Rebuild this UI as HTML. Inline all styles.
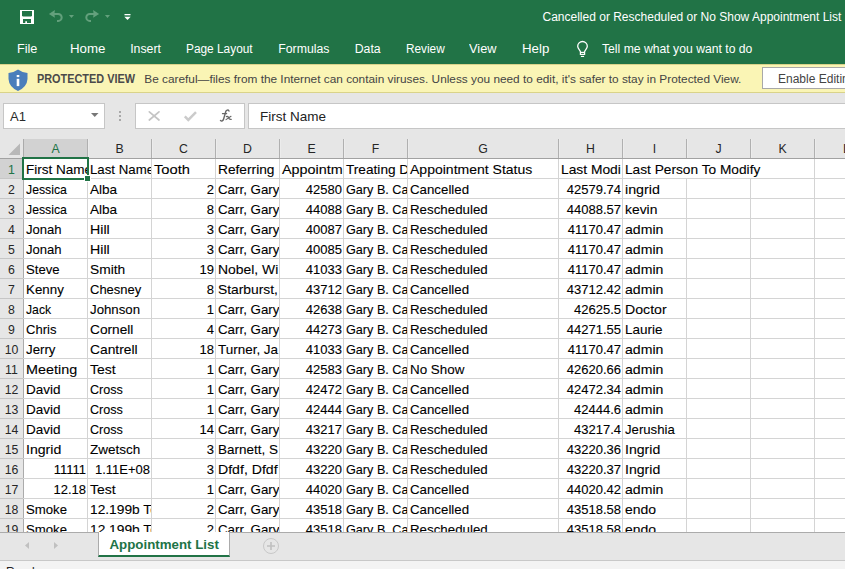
<!DOCTYPE html>
<html><head><meta charset="utf-8"><style>
*{margin:0;padding:0;box-sizing:border-box}
html,body{width:845px;height:569px;overflow:hidden;background:#fff;font-family:"Liberation Sans",sans-serif}
.a{position:absolute}
.t{position:absolute;white-space:nowrap;line-height:1}
#title{left:0;top:0;width:845px;height:64px;background:#217346}
#pv{left:0;top:64px;width:845px;height:29px;background:#faf5b5;border-top:1px solid #d9d38a;border-bottom:1px solid #d9d38a}
#fb{left:0;top:93px;width:845px;height:46px;background:#e6e6e6}
.box{position:absolute;background:#fff;border:1px solid #c6c6c6}
#hdr{left:0;top:139px;width:845px;height:20px;background:#e6e6e6}
.cell{position:absolute;overflow:hidden;white-space:nowrap;height:19px;color:#000;-webkit-text-stroke:0.1px #000}
.cell span{position:absolute;line-height:1}
#tabs{left:0;top:532px;width:845px;height:28px;background:#e6e6e6;border-top:1px solid #ababab}
#status{left:0;top:560px;width:845px;height:9px;background:#f3f3f3;border-top:1px solid #c8c8c8}
</style></head>
<body>
<div id="title" class="a"><svg class="a" style="left:20px;top:10px" width="14" height="14" viewBox="0 0 14 14">
<rect x="0" y="0" width="14" height="14" fill="#fff"/>
<path d="M2 1H12V5.6L11.2 6.4H2.8L2 5.6Z" fill="#217346"/>
<path d="M3 9H11V13H7V11.3H5.3V13H3Z" fill="#217346"/>
</svg><svg class="a" style="left:46px;top:8px" width="90" height="18" viewBox="0 0 90 18">
<g fill="none" stroke="#63a07c" stroke-width="2">
<path d="M6 5.9H12.2A3.5 3.5 0 0 1 12.2 12.9H11"/>
<path d="M50 5.9H43.8A3.5 3.5 0 0 0 43.8 12.9H45"/>
</g>
<path d="M2.9 5.9L8.9 1.9L8.4 5.9L8.9 9.8Z" fill="#63a07c"/>
<path d="M53.1 5.9L47.1 1.9L47.6 5.9L47.1 9.8Z" fill="#63a07c"/>
<path d="M22.9 7L28 7L25.45 10Z" fill="#63a07c"/>
<path d="M58.9 7L64 7L61.45 10Z" fill="#63a07c"/>
<rect x="78.5" y="6" width="6" height="1.3" fill="#fff"/>
<path d="M78.3 8.8L84.7 8.8L81.5 12Z" fill="#fff"/>
</svg><div class="t" style="left:542.5px;top:11px;font-size:12px;color:#fff">Cancelled or Rescheduled or No Show Appointment List</div><div class="t" style="left:17.2px;top:43px;font-size:12.3px;color:#fff;transform:scaleX(1.03);transform-origin:0 0">File</div><div class="t" style="left:70.2px;top:43px;font-size:12.3px;color:#fff;transform:scaleX(1.08);transform-origin:0 0">Home</div><div class="t" style="left:130.2px;top:43px;font-size:12.3px;color:#fff;transform:scaleX(1.0);transform-origin:0 0">Insert</div><div class="t" style="left:186.2px;top:43px;font-size:12.3px;color:#fff;transform:scaleX(0.965);transform-origin:0 0">Page Layout</div><div class="t" style="left:278.2px;top:43px;font-size:12.3px;color:#fff;transform:scaleX(1.0);transform-origin:0 0">Formulas</div><div class="t" style="left:354.7px;top:43px;font-size:12.3px;color:#fff;transform:scaleX(1.0);transform-origin:0 0">Data</div><div class="t" style="left:405.7px;top:43px;font-size:12.3px;color:#fff;transform:scaleX(0.96);transform-origin:0 0">Review</div><div class="t" style="left:469.2px;top:43px;font-size:12.3px;color:#fff;transform:scaleX(1.04);transform-origin:0 0">View</div><div class="t" style="left:521.7px;top:43px;font-size:12.3px;color:#fff;transform:scaleX(1.08);transform-origin:0 0">Help</div><svg class="a" style="left:575px;top:40px" width="16" height="18" viewBox="0 0 16 18">
<path d="M5.5 12C5.2 10 2.7 8.8 2.7 6.3A4.8 4.8 0 0 1 12.3 6.3C12.3 8.8 9.8 10 9.5 12" fill="none" stroke="#fff" stroke-width="1.3"/>
<rect x="5.4" y="12.4" width="4.2" height="2" fill="none" stroke="#fff" stroke-width="1.2"/>
<rect x="5.9" y="15.9" width="3.2" height="1.1" fill="#fff"/>
</svg><div class="t" style="left:602px;top:43px;font-size:12.2px;color:#fff">Tell me what you want to do</div></div><div id="pv" class="a"><svg class="a" style="left:8px;top:3.5px" width="20" height="23" viewBox="0 0 20 23">
<path d="M10 0.5Q5.5 3.8 0.5 4V10Q1 18 10 22Q19 18 19.5 10V4Q14.5 3.8 10 0.5Z" fill="#4a7ebb"/>
<rect x="8.7" y="6" width="2.6" height="2.1" fill="#fff"/><rect x="8.7" y="9.8" width="2.6" height="7.3" fill="#fff"/>
</svg><div class="t" style="left:37px;top:8px;font-size:12.3px;font-weight:bold;color:#4a4a4a;transform:scaleX(0.885);transform-origin:0 0">PROTECTED VIEW</div><div class="t" style="left:144.3px;top:9px;font-size:11.84px;color:#444">Be careful—files from the Internet can contain viruses. Unless you need to edit, it's safer to stay in Protected View.</div><div class="a" style="left:762px;top:2px;width:100px;height:22px;background:#fff;border:1px solid #a8a8a8"></div><div class="t" style="left:778px;top:8px;font-size:12px;color:#444">Enable Editing</div></div><div id="fb" class="a"><div class="box" style="left:3px;top:10px;width:102px;height:26px"></div><div class="t" style="left:10px;top:17.4px;font-size:13px;color:#2a2a2a">A1</div><svg class="a" style="left:91px;top:20px" width="8" height="5"><path d="M0 0H7.5L3.75 4Z" fill="#777"/></svg><svg class="a" style="left:118px;top:18px" width="4" height="11"><rect x="1" y="0" width="2" height="2" fill="#a8a8a8"/><rect x="1" y="4" width="2" height="2" fill="#a8a8a8"/><rect x="1" y="8" width="2" height="2" fill="#a8a8a8"/></svg><div class="box" style="left:135px;top:10px;width:110px;height:26px"></div><svg class="a" style="left:146px;top:17px" width="90" height="14" viewBox="0 0 90 14">
<path d="M3.3 1.8L13 10M13 1.8L3.3 10" stroke="#c4c4c4" stroke-width="1.7" fill="none" stroke-linecap="round"/>
<path d="M38.8 6.4L42.3 9.9L50 2.2" stroke="#cbcbcb" stroke-width="2.5" fill="none"/>
</svg><svg class="a" style="left:214px;top:11px" width="26" height="24" viewBox="0 0 26 24"><g fill="none" stroke="#676767" stroke-linecap="round">
<path d="M15 7C14.3 5.6 12.3 5.8 11.8 7.5L9.6 15C9.1 16.9 7.6 17.4 6.5 16.5" stroke-width="1.4"/>
<path d="M8.4 9.6H12.7" stroke-width="1.1"/>
<path d="M12 15.6L17 12.3" stroke-width="1.1"/>
<path d="M12.4 12.6Q14 12 14.6 13.8Q15.2 15.7 17.2 15.4" stroke-width="1.3"/>
</g></svg><div class="box" style="left:248px;top:10px;width:610px;height:26px"></div><div class="t" style="left:260px;top:17px;font-size:13.5px;color:#222">First Name</div></div><div id="hdr" class="a"></div><svg class="a" style="left:8px;top:143px" width="13" height="13"><path d="M12 0.5V12H0.5Z" fill="#b8b8b8"/></svg><div class="a" style="left:24px;top:139px;width:63px;height:19px;background:#d2d2d2"></div><div class="a" style="left:0;top:159px;width:23px;height:373px;background:#e6e6e6"></div><div class="a" style="left:0;top:159px;width:23px;height:19px;background:#d2d2d2"></div><div class="a" style="left:0;top:158px;width:845px;height:1px;background:#a2a2a2"></div><div class="a" style="left:23px;top:139px;width:1px;height:393px;background:#ababab"></div><div class="a" style="left:87px;top:139px;width:1px;height:19px;background:#b0b0b0"></div><div class="a" style="left:88px;top:139px;width:1px;height:19px;background:#ececec"></div><div class="t" style="left:23px;top:142.5px;width:65px;text-align:center;font-size:12.3px;color:#217346">A</div><div class="a" style="left:151px;top:139px;width:1px;height:19px;background:#b0b0b0"></div><div class="a" style="left:152px;top:139px;width:1px;height:19px;background:#ececec"></div><div class="t" style="left:87px;top:142.5px;width:65px;text-align:center;font-size:12.3px;color:#262626">B</div><div class="a" style="left:215px;top:139px;width:1px;height:19px;background:#b0b0b0"></div><div class="a" style="left:216px;top:139px;width:1px;height:19px;background:#ececec"></div><div class="t" style="left:151px;top:142.5px;width:65px;text-align:center;font-size:12.3px;color:#262626">C</div><div class="a" style="left:279px;top:139px;width:1px;height:19px;background:#b0b0b0"></div><div class="a" style="left:280px;top:139px;width:1px;height:19px;background:#ececec"></div><div class="t" style="left:215px;top:142.5px;width:65px;text-align:center;font-size:12.3px;color:#262626">D</div><div class="a" style="left:343px;top:139px;width:1px;height:19px;background:#b0b0b0"></div><div class="a" style="left:344px;top:139px;width:1px;height:19px;background:#ececec"></div><div class="t" style="left:279px;top:142.5px;width:65px;text-align:center;font-size:12.3px;color:#262626">E</div><div class="a" style="left:407px;top:139px;width:1px;height:19px;background:#b0b0b0"></div><div class="a" style="left:408px;top:139px;width:1px;height:19px;background:#ececec"></div><div class="t" style="left:343px;top:142.5px;width:65px;text-align:center;font-size:12.3px;color:#262626">F</div><div class="a" style="left:558px;top:139px;width:1px;height:19px;background:#b0b0b0"></div><div class="a" style="left:559px;top:139px;width:1px;height:19px;background:#ececec"></div><div class="t" style="left:407px;top:142.5px;width:152px;text-align:center;font-size:12.3px;color:#262626">G</div><div class="a" style="left:622px;top:139px;width:1px;height:19px;background:#b0b0b0"></div><div class="a" style="left:623px;top:139px;width:1px;height:19px;background:#ececec"></div><div class="t" style="left:558px;top:142.5px;width:65px;text-align:center;font-size:12.3px;color:#262626">H</div><div class="a" style="left:686px;top:139px;width:1px;height:19px;background:#b0b0b0"></div><div class="a" style="left:687px;top:139px;width:1px;height:19px;background:#ececec"></div><div class="t" style="left:622px;top:142.5px;width:65px;text-align:center;font-size:12.3px;color:#262626">I</div><div class="a" style="left:750px;top:139px;width:1px;height:19px;background:#b0b0b0"></div><div class="a" style="left:751px;top:139px;width:1px;height:19px;background:#ececec"></div><div class="t" style="left:686px;top:142.5px;width:65px;text-align:center;font-size:12.3px;color:#262626">J</div><div class="a" style="left:814px;top:139px;width:1px;height:19px;background:#b0b0b0"></div><div class="a" style="left:815px;top:139px;width:1px;height:19px;background:#ececec"></div><div class="t" style="left:750px;top:142.5px;width:65px;text-align:center;font-size:12.3px;color:#262626">K</div><div class="a" style="left:878px;top:139px;width:1px;height:19px;background:#b0b0b0"></div><div class="a" style="left:879px;top:139px;width:1px;height:19px;background:#ececec"></div><div class="t" style="left:814px;top:142.5px;width:65px;text-align:center;font-size:12.3px;color:#262626">L</div><div class="a" style="left:87px;top:159px;width:1px;height:373px;background:#d4d4d4"></div><div class="a" style="left:151px;top:159px;width:1px;height:373px;background:#d4d4d4"></div><div class="a" style="left:215px;top:159px;width:1px;height:373px;background:#d4d4d4"></div><div class="a" style="left:279px;top:159px;width:1px;height:373px;background:#d4d4d4"></div><div class="a" style="left:343px;top:159px;width:1px;height:373px;background:#d4d4d4"></div><div class="a" style="left:407px;top:159px;width:1px;height:373px;background:#d4d4d4"></div><div class="a" style="left:558px;top:159px;width:1px;height:373px;background:#d4d4d4"></div><div class="a" style="left:622px;top:159px;width:1px;height:373px;background:#d4d4d4"></div><div class="a" style="left:686px;top:159px;width:1px;height:373px;background:#d4d4d4"></div><div class="a" style="left:750px;top:159px;width:1px;height:373px;background:#d4d4d4"></div><div class="a" style="left:814px;top:159px;width:1px;height:373px;background:#d4d4d4"></div><div class="a" style="left:878px;top:159px;width:1px;height:373px;background:#d4d4d4"></div><div class="a" style="left:23px;top:178px;width:822px;height:1px;background:#d4d4d4"></div><div class="a" style="left:0px;top:178px;width:23px;height:1px;background:#c6c6c6"></div><div class="a" style="left:23px;top:198px;width:822px;height:1px;background:#d4d4d4"></div><div class="a" style="left:0px;top:198px;width:23px;height:1px;background:#c6c6c6"></div><div class="a" style="left:23px;top:218px;width:822px;height:1px;background:#d4d4d4"></div><div class="a" style="left:0px;top:218px;width:23px;height:1px;background:#c6c6c6"></div><div class="a" style="left:23px;top:238px;width:822px;height:1px;background:#d4d4d4"></div><div class="a" style="left:0px;top:238px;width:23px;height:1px;background:#c6c6c6"></div><div class="a" style="left:23px;top:258px;width:822px;height:1px;background:#d4d4d4"></div><div class="a" style="left:0px;top:258px;width:23px;height:1px;background:#c6c6c6"></div><div class="a" style="left:23px;top:278px;width:822px;height:1px;background:#d4d4d4"></div><div class="a" style="left:0px;top:278px;width:23px;height:1px;background:#c6c6c6"></div><div class="a" style="left:23px;top:298px;width:822px;height:1px;background:#d4d4d4"></div><div class="a" style="left:0px;top:298px;width:23px;height:1px;background:#c6c6c6"></div><div class="a" style="left:23px;top:318px;width:822px;height:1px;background:#d4d4d4"></div><div class="a" style="left:0px;top:318px;width:23px;height:1px;background:#c6c6c6"></div><div class="a" style="left:23px;top:338px;width:822px;height:1px;background:#d4d4d4"></div><div class="a" style="left:0px;top:338px;width:23px;height:1px;background:#c6c6c6"></div><div class="a" style="left:23px;top:358px;width:822px;height:1px;background:#d4d4d4"></div><div class="a" style="left:0px;top:358px;width:23px;height:1px;background:#c6c6c6"></div><div class="a" style="left:23px;top:378px;width:822px;height:1px;background:#d4d4d4"></div><div class="a" style="left:0px;top:378px;width:23px;height:1px;background:#c6c6c6"></div><div class="a" style="left:23px;top:398px;width:822px;height:1px;background:#d4d4d4"></div><div class="a" style="left:0px;top:398px;width:23px;height:1px;background:#c6c6c6"></div><div class="a" style="left:23px;top:418px;width:822px;height:1px;background:#d4d4d4"></div><div class="a" style="left:0px;top:418px;width:23px;height:1px;background:#c6c6c6"></div><div class="a" style="left:23px;top:438px;width:822px;height:1px;background:#d4d4d4"></div><div class="a" style="left:0px;top:438px;width:23px;height:1px;background:#c6c6c6"></div><div class="a" style="left:23px;top:458px;width:822px;height:1px;background:#d4d4d4"></div><div class="a" style="left:0px;top:458px;width:23px;height:1px;background:#c6c6c6"></div><div class="a" style="left:23px;top:478px;width:822px;height:1px;background:#d4d4d4"></div><div class="a" style="left:0px;top:478px;width:23px;height:1px;background:#c6c6c6"></div><div class="a" style="left:23px;top:498px;width:822px;height:1px;background:#d4d4d4"></div><div class="a" style="left:0px;top:498px;width:23px;height:1px;background:#c6c6c6"></div><div class="a" style="left:23px;top:518px;width:822px;height:1px;background:#d4d4d4"></div><div class="a" style="left:0px;top:518px;width:23px;height:1px;background:#c6c6c6"></div><div class="t" style="left:0;top:164px;width:23px;text-align:center;font-size:12.3px;color:#217346">1</div><div class="t" style="left:0;top:184px;width:23px;text-align:center;font-size:12.3px;color:#262626">2</div><div class="t" style="left:0;top:204px;width:23px;text-align:center;font-size:12.3px;color:#262626">3</div><div class="t" style="left:0;top:224px;width:23px;text-align:center;font-size:12.3px;color:#262626">4</div><div class="t" style="left:0;top:244px;width:23px;text-align:center;font-size:12.3px;color:#262626">5</div><div class="t" style="left:0;top:264px;width:23px;text-align:center;font-size:12.3px;color:#262626">6</div><div class="t" style="left:0;top:284px;width:23px;text-align:center;font-size:12.3px;color:#262626">7</div><div class="t" style="left:0;top:304px;width:23px;text-align:center;font-size:12.3px;color:#262626">8</div><div class="t" style="left:0;top:324px;width:23px;text-align:center;font-size:12.3px;color:#262626">9</div><div class="t" style="left:0;top:344px;width:23px;text-align:center;font-size:12.3px;color:#262626">10</div><div class="t" style="left:0;top:364px;width:23px;text-align:center;font-size:12.3px;color:#262626">11</div><div class="t" style="left:0;top:384px;width:23px;text-align:center;font-size:12.3px;color:#262626">12</div><div class="t" style="left:0;top:404px;width:23px;text-align:center;font-size:12.3px;color:#262626">13</div><div class="t" style="left:0;top:424px;width:23px;text-align:center;font-size:12.3px;color:#262626">14</div><div class="t" style="left:0;top:444px;width:23px;text-align:center;font-size:12.3px;color:#262626">15</div><div class="t" style="left:0;top:464px;width:23px;text-align:center;font-size:12.3px;color:#262626">16</div><div class="t" style="left:0;top:484px;width:23px;text-align:center;font-size:12.3px;color:#262626">17</div><div class="t" style="left:0;top:504px;width:23px;text-align:center;font-size:12.3px;color:#262626">18</div><div class="t" style="left:0;top:524px;width:23px;text-align:center;font-size:12.3px;color:#262626">19</div><div class="cell" style="left:24px;top:159px;width:63px;"><span style="left:2px;top:4px;font-size:13.5px;transform:scaleX(1.0022);transform-origin:0 0">First Name</span></div><div class="cell" style="left:88px;top:159px;width:63px;"><span style="left:2px;top:4px;font-size:13.5px;transform:scaleX(0.9817);transform-origin:0 0">Last Name</span></div><div class="cell" style="left:152px;top:159px;width:63px;"><span style="left:2px;top:4px;font-size:13.5px;transform:scaleX(1.0909);transform-origin:0 0">Tooth</span></div><div class="cell" style="left:216px;top:159px;width:63px;"><span style="left:2px;top:4px;font-size:13.5px;transform:scaleX(1.0173);transform-origin:0 0">Referring</span></div><div class="cell" style="left:280px;top:159px;width:63px;"><span style="left:2px;top:4px;font-size:13.5px;transform:scaleX(1.0637);transform-origin:0 0">Appointm</span></div><div class="cell" style="left:344px;top:159px;width:63px;"><span style="left:2px;top:4px;font-size:13.5px;transform:scaleX(1.0109);transform-origin:0 0">Treating D</span></div><div class="cell" style="left:408px;top:159px;width:150px;"><span style="left:2px;top:4px;font-size:13.5px;transform:scaleX(1.0381);transform-origin:0 0">Appointment Status</span></div><div class="cell" style="left:559px;top:159px;width:63px;"><span style="left:2px;top:4px;font-size:13.5px;transform:scaleX(1.0222);transform-origin:0 0">Last Modi</span></div><div class="cell" style="left:623px;top:159px;width:191px;background:#fff;"><span style="left:2px;top:4px;font-size:13.5px;transform:scaleX(1.0148);transform-origin:0 0">Last Person To Modify</span></div><div class="cell" style="left:24px;top:179px;width:63px;"><span style="left:2px;top:4px;font-size:13.5px;transform:scaleX(0.9097);transform-origin:0 0">Jessica</span></div><div class="cell" style="left:88px;top:179px;width:63px;"><span style="left:2px;top:4px;font-size:13.5px;transform:scaleX(1.0058);transform-origin:0 0">Alba</span></div><div class="cell" style="left:152px;top:179px;width:63px"><span style="right:1px;top:4px;font-size:13px">2</span></div><div class="cell" style="left:216px;top:179px;width:63px;"><span style="left:2px;top:4px;font-size:13.5px;transform:scaleX(0.9868);transform-origin:0 0">Carr, Gary</span></div><div class="cell" style="left:280px;top:179px;width:63px"><span style="right:1px;top:4px;font-size:13px">42580</span></div><div class="cell" style="left:344px;top:179px;width:63px;"><span style="left:2px;top:4px;font-size:13.5px;transform:scaleX(0.9364);transform-origin:0 0">Gary B. Ca</span></div><div class="cell" style="left:408px;top:179px;width:150px;"><span style="left:2px;top:4px;font-size:13.5px;transform:scaleX(0.9842);transform-origin:0 0">Cancelled</span></div><div class="cell" style="left:559px;top:179px;width:63px"><span style="right:1px;top:4px;font-size:13px">42579.74</span></div><div class="cell" style="left:623px;top:179px;width:64px;"><span style="left:2px;top:4px;font-size:13.5px;transform:scaleX(1.0577);transform-origin:0 0">ingrid</span></div><div class="cell" style="left:24px;top:199px;width:63px;"><span style="left:2px;top:4px;font-size:13.5px;transform:scaleX(0.9097);transform-origin:0 0">Jessica</span></div><div class="cell" style="left:88px;top:199px;width:63px;"><span style="left:2px;top:4px;font-size:13.5px;transform:scaleX(1.0058);transform-origin:0 0">Alba</span></div><div class="cell" style="left:152px;top:199px;width:63px"><span style="right:1px;top:4px;font-size:13px">8</span></div><div class="cell" style="left:216px;top:199px;width:63px;"><span style="left:2px;top:4px;font-size:13.5px;transform:scaleX(0.9868);transform-origin:0 0">Carr, Gary</span></div><div class="cell" style="left:280px;top:199px;width:63px"><span style="right:1px;top:4px;font-size:13px">44088</span></div><div class="cell" style="left:344px;top:199px;width:63px;"><span style="left:2px;top:4px;font-size:13.5px;transform:scaleX(0.9364);transform-origin:0 0">Gary B. Ca</span></div><div class="cell" style="left:408px;top:199px;width:150px;"><span style="left:2px;top:4px;font-size:13.5px;transform:scaleX(0.9860);transform-origin:0 0">Rescheduled</span></div><div class="cell" style="left:559px;top:199px;width:63px"><span style="right:1px;top:4px;font-size:13px">44088.57</span></div><div class="cell" style="left:623px;top:199px;width:64px;"><span style="left:2px;top:4px;font-size:13.5px;transform:scaleX(1.0274);transform-origin:0 0">kevin</span></div><div class="cell" style="left:24px;top:219px;width:63px;"><span style="left:2px;top:4px;font-size:13.5px;transform:scaleX(0.9686);transform-origin:0 0">Jonah</span></div><div class="cell" style="left:88px;top:219px;width:63px;"><span style="left:2px;top:4px;font-size:13.5px;transform:scaleX(1.0492);transform-origin:0 0">Hill</span></div><div class="cell" style="left:152px;top:219px;width:63px"><span style="right:1px;top:4px;font-size:13px">3</span></div><div class="cell" style="left:216px;top:219px;width:63px;"><span style="left:2px;top:4px;font-size:13.5px;transform:scaleX(0.9868);transform-origin:0 0">Carr, Gary</span></div><div class="cell" style="left:280px;top:219px;width:63px"><span style="right:1px;top:4px;font-size:13px">40087</span></div><div class="cell" style="left:344px;top:219px;width:63px;"><span style="left:2px;top:4px;font-size:13.5px;transform:scaleX(0.9364);transform-origin:0 0">Gary B. Ca</span></div><div class="cell" style="left:408px;top:219px;width:150px;"><span style="left:2px;top:4px;font-size:13.5px;transform:scaleX(0.9860);transform-origin:0 0">Rescheduled</span></div><div class="cell" style="left:559px;top:219px;width:63px"><span style="right:1px;top:4px;font-size:13px">41170.47</span></div><div class="cell" style="left:623px;top:219px;width:64px;"><span style="left:2px;top:4px;font-size:13.5px;transform:scaleX(1.0432);transform-origin:0 0">admin</span></div><div class="cell" style="left:24px;top:239px;width:63px;"><span style="left:2px;top:4px;font-size:13.5px;transform:scaleX(0.9686);transform-origin:0 0">Jonah</span></div><div class="cell" style="left:88px;top:239px;width:63px;"><span style="left:2px;top:4px;font-size:13.5px;transform:scaleX(1.0492);transform-origin:0 0">Hill</span></div><div class="cell" style="left:152px;top:239px;width:63px"><span style="right:1px;top:4px;font-size:13px">3</span></div><div class="cell" style="left:216px;top:239px;width:63px;"><span style="left:2px;top:4px;font-size:13.5px;transform:scaleX(0.9868);transform-origin:0 0">Carr, Gary</span></div><div class="cell" style="left:280px;top:239px;width:63px"><span style="right:1px;top:4px;font-size:13px">40085</span></div><div class="cell" style="left:344px;top:239px;width:63px;"><span style="left:2px;top:4px;font-size:13.5px;transform:scaleX(0.9364);transform-origin:0 0">Gary B. Ca</span></div><div class="cell" style="left:408px;top:239px;width:150px;"><span style="left:2px;top:4px;font-size:13.5px;transform:scaleX(0.9860);transform-origin:0 0">Rescheduled</span></div><div class="cell" style="left:559px;top:239px;width:63px"><span style="right:1px;top:4px;font-size:13px">41170.47</span></div><div class="cell" style="left:623px;top:239px;width:64px;"><span style="left:2px;top:4px;font-size:13.5px;transform:scaleX(1.0432);transform-origin:0 0">admin</span></div><div class="cell" style="left:24px;top:259px;width:63px;"><span style="left:2px;top:4px;font-size:13.5px;transform:scaleX(0.9736);transform-origin:0 0">Steve</span></div><div class="cell" style="left:88px;top:259px;width:63px;"><span style="left:2px;top:4px;font-size:13.5px;transform:scaleX(1.0205);transform-origin:0 0">Smith</span></div><div class="cell" style="left:152px;top:259px;width:63px"><span style="right:1px;top:4px;font-size:13px">19</span></div><div class="cell" style="left:216px;top:259px;width:63px;"><span style="left:2px;top:4px;font-size:13.5px;transform:scaleX(1.0305);transform-origin:0 0">Nobel, Wi</span></div><div class="cell" style="left:280px;top:259px;width:63px"><span style="right:1px;top:4px;font-size:13px">41033</span></div><div class="cell" style="left:344px;top:259px;width:63px;"><span style="left:2px;top:4px;font-size:13.5px;transform:scaleX(0.9364);transform-origin:0 0">Gary B. Ca</span></div><div class="cell" style="left:408px;top:259px;width:150px;"><span style="left:2px;top:4px;font-size:13.5px;transform:scaleX(0.9860);transform-origin:0 0">Rescheduled</span></div><div class="cell" style="left:559px;top:259px;width:63px"><span style="right:1px;top:4px;font-size:13px">41170.47</span></div><div class="cell" style="left:623px;top:259px;width:64px;"><span style="left:2px;top:4px;font-size:13.5px;transform:scaleX(1.0432);transform-origin:0 0">admin</span></div><div class="cell" style="left:24px;top:279px;width:63px;"><span style="left:2px;top:4px;font-size:13.5px;transform:scaleX(0.9876);transform-origin:0 0">Kenny</span></div><div class="cell" style="left:88px;top:279px;width:63px;"><span style="left:2px;top:4px;font-size:13.5px;transform:scaleX(0.9633);transform-origin:0 0">Chesney</span></div><div class="cell" style="left:152px;top:279px;width:63px"><span style="right:1px;top:4px;font-size:13px">8</span></div><div class="cell" style="left:216px;top:279px;width:63px;"><span style="left:2px;top:4px;font-size:13.5px;transform:scaleX(1.0243);transform-origin:0 0">Starburst,</span></div><div class="cell" style="left:280px;top:279px;width:63px"><span style="right:1px;top:4px;font-size:13px">43712</span></div><div class="cell" style="left:344px;top:279px;width:63px;"><span style="left:2px;top:4px;font-size:13.5px;transform:scaleX(0.9364);transform-origin:0 0">Gary B. Ca</span></div><div class="cell" style="left:408px;top:279px;width:150px;"><span style="left:2px;top:4px;font-size:13.5px;transform:scaleX(0.9842);transform-origin:0 0">Cancelled</span></div><div class="cell" style="left:559px;top:279px;width:63px"><span style="right:1px;top:4px;font-size:13px">43712.42</span></div><div class="cell" style="left:623px;top:279px;width:64px;"><span style="left:2px;top:4px;font-size:13.5px;transform:scaleX(1.0432);transform-origin:0 0">admin</span></div><div class="cell" style="left:24px;top:299px;width:63px;"><span style="left:2px;top:4px;font-size:13.5px;transform:scaleX(0.9051);transform-origin:0 0">Jack</span></div><div class="cell" style="left:88px;top:299px;width:63px;"><span style="left:2px;top:4px;font-size:13.5px;transform:scaleX(0.9817);transform-origin:0 0">Johnson</span></div><div class="cell" style="left:152px;top:299px;width:63px"><span style="right:1px;top:4px;font-size:13px">1</span></div><div class="cell" style="left:216px;top:299px;width:63px;"><span style="left:2px;top:4px;font-size:13.5px;transform:scaleX(0.9868);transform-origin:0 0">Carr, Gary</span></div><div class="cell" style="left:280px;top:299px;width:63px"><span style="right:1px;top:4px;font-size:13px">42638</span></div><div class="cell" style="left:344px;top:299px;width:63px;"><span style="left:2px;top:4px;font-size:13.5px;transform:scaleX(0.9364);transform-origin:0 0">Gary B. Ca</span></div><div class="cell" style="left:408px;top:299px;width:150px;"><span style="left:2px;top:4px;font-size:13.5px;transform:scaleX(0.9860);transform-origin:0 0">Rescheduled</span></div><div class="cell" style="left:559px;top:299px;width:63px"><span style="right:1px;top:4px;font-size:13px">42625.5</span></div><div class="cell" style="left:623px;top:299px;width:64px;"><span style="left:2px;top:4px;font-size:13.5px;transform:scaleX(1.0473);transform-origin:0 0">Doctor</span></div><div class="cell" style="left:24px;top:319px;width:63px;"><span style="left:2px;top:4px;font-size:13.5px;transform:scaleX(0.9652);transform-origin:0 0">Chris</span></div><div class="cell" style="left:88px;top:319px;width:63px;"><span style="left:2px;top:4px;font-size:13.5px;transform:scaleX(1.0137);transform-origin:0 0">Cornell</span></div><div class="cell" style="left:152px;top:319px;width:63px"><span style="right:1px;top:4px;font-size:13px">4</span></div><div class="cell" style="left:216px;top:319px;width:63px;"><span style="left:2px;top:4px;font-size:13.5px;transform:scaleX(0.9868);transform-origin:0 0">Carr, Gary</span></div><div class="cell" style="left:280px;top:319px;width:63px"><span style="right:1px;top:4px;font-size:13px">44273</span></div><div class="cell" style="left:344px;top:319px;width:63px;"><span style="left:2px;top:4px;font-size:13.5px;transform:scaleX(0.9364);transform-origin:0 0">Gary B. Ca</span></div><div class="cell" style="left:408px;top:319px;width:150px;"><span style="left:2px;top:4px;font-size:13.5px;transform:scaleX(0.9860);transform-origin:0 0">Rescheduled</span></div><div class="cell" style="left:559px;top:319px;width:63px"><span style="right:1px;top:4px;font-size:13px">44271.55</span></div><div class="cell" style="left:623px;top:319px;width:64px;"><span style="left:2px;top:4px;font-size:13.5px;transform:scaleX(0.9994);transform-origin:0 0">Laurie</span></div><div class="cell" style="left:24px;top:339px;width:63px;"><span style="left:2px;top:4px;font-size:13.5px;transform:scaleX(0.9832);transform-origin:0 0">Jerry</span></div><div class="cell" style="left:88px;top:339px;width:63px;"><span style="left:2px;top:4px;font-size:13.5px;transform:scaleX(1.0244);transform-origin:0 0">Cantrell</span></div><div class="cell" style="left:152px;top:339px;width:63px"><span style="right:1px;top:4px;font-size:13px">18</span></div><div class="cell" style="left:216px;top:339px;width:63px;"><span style="left:2px;top:4px;font-size:13.5px;transform:scaleX(0.9969);transform-origin:0 0">Turner, Ja</span></div><div class="cell" style="left:280px;top:339px;width:63px"><span style="right:1px;top:4px;font-size:13px">41033</span></div><div class="cell" style="left:344px;top:339px;width:63px;"><span style="left:2px;top:4px;font-size:13.5px;transform:scaleX(0.9364);transform-origin:0 0">Gary B. Ca</span></div><div class="cell" style="left:408px;top:339px;width:150px;"><span style="left:2px;top:4px;font-size:13.5px;transform:scaleX(0.9842);transform-origin:0 0">Cancelled</span></div><div class="cell" style="left:559px;top:339px;width:63px"><span style="right:1px;top:4px;font-size:13px">41170.47</span></div><div class="cell" style="left:623px;top:339px;width:64px;"><span style="left:2px;top:4px;font-size:13.5px;transform:scaleX(1.0432);transform-origin:0 0">admin</span></div><div class="cell" style="left:24px;top:359px;width:63px;"><span style="left:2px;top:4px;font-size:13.5px;transform:scaleX(1.0651);transform-origin:0 0">Meeting</span></div><div class="cell" style="left:88px;top:359px;width:63px;"><span style="left:2px;top:4px;font-size:13.5px;transform:scaleX(1.0363);transform-origin:0 0">Test</span></div><div class="cell" style="left:152px;top:359px;width:63px"><span style="right:1px;top:4px;font-size:13px">1</span></div><div class="cell" style="left:216px;top:359px;width:63px;"><span style="left:2px;top:4px;font-size:13.5px;transform:scaleX(0.9868);transform-origin:0 0">Carr, Gary</span></div><div class="cell" style="left:280px;top:359px;width:63px"><span style="right:1px;top:4px;font-size:13px">42583</span></div><div class="cell" style="left:344px;top:359px;width:63px;"><span style="left:2px;top:4px;font-size:13.5px;transform:scaleX(0.9364);transform-origin:0 0">Gary B. Ca</span></div><div class="cell" style="left:408px;top:359px;width:150px;"><span style="left:2px;top:4px;font-size:13.5px;transform:scaleX(0.9929);transform-origin:0 0">No Show</span></div><div class="cell" style="left:559px;top:359px;width:63px"><span style="right:1px;top:4px;font-size:13px">42620.66</span></div><div class="cell" style="left:623px;top:359px;width:64px;"><span style="left:2px;top:4px;font-size:13.5px;transform:scaleX(1.0432);transform-origin:0 0">admin</span></div><div class="cell" style="left:24px;top:379px;width:63px;"><span style="left:2px;top:4px;font-size:13.5px;transform:scaleX(0.9999);transform-origin:0 0">David</span></div><div class="cell" style="left:88px;top:379px;width:63px;"><span style="left:2px;top:4px;font-size:13.5px;transform:scaleX(0.9321);transform-origin:0 0">Cross</span></div><div class="cell" style="left:152px;top:379px;width:63px"><span style="right:1px;top:4px;font-size:13px">1</span></div><div class="cell" style="left:216px;top:379px;width:63px;"><span style="left:2px;top:4px;font-size:13.5px;transform:scaleX(0.9868);transform-origin:0 0">Carr, Gary</span></div><div class="cell" style="left:280px;top:379px;width:63px"><span style="right:1px;top:4px;font-size:13px">42472</span></div><div class="cell" style="left:344px;top:379px;width:63px;"><span style="left:2px;top:4px;font-size:13.5px;transform:scaleX(0.9364);transform-origin:0 0">Gary B. Ca</span></div><div class="cell" style="left:408px;top:379px;width:150px;"><span style="left:2px;top:4px;font-size:13.5px;transform:scaleX(0.9842);transform-origin:0 0">Cancelled</span></div><div class="cell" style="left:559px;top:379px;width:63px"><span style="right:1px;top:4px;font-size:13px">42472.34</span></div><div class="cell" style="left:623px;top:379px;width:64px;"><span style="left:2px;top:4px;font-size:13.5px;transform:scaleX(1.0432);transform-origin:0 0">admin</span></div><div class="cell" style="left:24px;top:399px;width:63px;"><span style="left:2px;top:4px;font-size:13.5px;transform:scaleX(0.9999);transform-origin:0 0">David</span></div><div class="cell" style="left:88px;top:399px;width:63px;"><span style="left:2px;top:4px;font-size:13.5px;transform:scaleX(0.9321);transform-origin:0 0">Cross</span></div><div class="cell" style="left:152px;top:399px;width:63px"><span style="right:1px;top:4px;font-size:13px">1</span></div><div class="cell" style="left:216px;top:399px;width:63px;"><span style="left:2px;top:4px;font-size:13.5px;transform:scaleX(0.9868);transform-origin:0 0">Carr, Gary</span></div><div class="cell" style="left:280px;top:399px;width:63px"><span style="right:1px;top:4px;font-size:13px">42444</span></div><div class="cell" style="left:344px;top:399px;width:63px;"><span style="left:2px;top:4px;font-size:13.5px;transform:scaleX(0.9364);transform-origin:0 0">Gary B. Ca</span></div><div class="cell" style="left:408px;top:399px;width:150px;"><span style="left:2px;top:4px;font-size:13.5px;transform:scaleX(0.9842);transform-origin:0 0">Cancelled</span></div><div class="cell" style="left:559px;top:399px;width:63px"><span style="right:1px;top:4px;font-size:13px">42444.6</span></div><div class="cell" style="left:623px;top:399px;width:64px;"><span style="left:2px;top:4px;font-size:13.5px;transform:scaleX(1.0432);transform-origin:0 0">admin</span></div><div class="cell" style="left:24px;top:419px;width:63px;"><span style="left:2px;top:4px;font-size:13.5px;transform:scaleX(0.9999);transform-origin:0 0">David</span></div><div class="cell" style="left:88px;top:419px;width:63px;"><span style="left:2px;top:4px;font-size:13.5px;transform:scaleX(0.9321);transform-origin:0 0">Cross</span></div><div class="cell" style="left:152px;top:419px;width:63px"><span style="right:1px;top:4px;font-size:13px">14</span></div><div class="cell" style="left:216px;top:419px;width:63px;"><span style="left:2px;top:4px;font-size:13.5px;transform:scaleX(0.9868);transform-origin:0 0">Carr, Gary</span></div><div class="cell" style="left:280px;top:419px;width:63px"><span style="right:1px;top:4px;font-size:13px">43217</span></div><div class="cell" style="left:344px;top:419px;width:63px;"><span style="left:2px;top:4px;font-size:13.5px;transform:scaleX(0.9364);transform-origin:0 0">Gary B. Ca</span></div><div class="cell" style="left:408px;top:419px;width:150px;"><span style="left:2px;top:4px;font-size:13.5px;transform:scaleX(0.9860);transform-origin:0 0">Rescheduled</span></div><div class="cell" style="left:559px;top:419px;width:63px"><span style="right:1px;top:4px;font-size:13px">43217.4</span></div><div class="cell" style="left:623px;top:419px;width:64px;"><span style="left:2px;top:4px;font-size:13.5px;transform:scaleX(0.9745);transform-origin:0 0">Jerushia</span></div><div class="cell" style="left:24px;top:439px;width:63px;"><span style="left:2px;top:4px;font-size:13.5px;transform:scaleX(1.0442);transform-origin:0 0">Ingrid</span></div><div class="cell" style="left:88px;top:439px;width:63px;"><span style="left:2px;top:4px;font-size:13.5px;transform:scaleX(1.0012);transform-origin:0 0">Zwetsch</span></div><div class="cell" style="left:152px;top:439px;width:63px"><span style="right:1px;top:4px;font-size:13px">3</span></div><div class="cell" style="left:216px;top:439px;width:63px;"><span style="left:2px;top:4px;font-size:13.5px;transform:scaleX(0.9991);transform-origin:0 0">Barnett, S</span></div><div class="cell" style="left:280px;top:439px;width:63px"><span style="right:1px;top:4px;font-size:13px">43220</span></div><div class="cell" style="left:344px;top:439px;width:63px;"><span style="left:2px;top:4px;font-size:13.5px;transform:scaleX(0.9364);transform-origin:0 0">Gary B. Ca</span></div><div class="cell" style="left:408px;top:439px;width:150px;"><span style="left:2px;top:4px;font-size:13.5px;transform:scaleX(0.9860);transform-origin:0 0">Rescheduled</span></div><div class="cell" style="left:559px;top:439px;width:63px"><span style="right:1px;top:4px;font-size:13px">43220.36</span></div><div class="cell" style="left:623px;top:439px;width:64px;"><span style="left:2px;top:4px;font-size:13.5px;transform:scaleX(1.0442);transform-origin:0 0">Ingrid</span></div><div class="cell" style="left:24px;top:459px;width:63px"><span style="right:1px;top:4px;font-size:13px">11111</span></div><div class="cell" style="left:88px;top:459px;width:63px"><span style="right:1px;top:4px;font-size:13px">1.11E+08</span></div><div class="cell" style="left:152px;top:459px;width:63px"><span style="right:1px;top:4px;font-size:13px">3</span></div><div class="cell" style="left:216px;top:459px;width:63px;"><span style="left:2px;top:4px;font-size:13.5px;transform:scaleX(1.0461);transform-origin:0 0">Dfdf, Dfdf</span></div><div class="cell" style="left:280px;top:459px;width:63px"><span style="right:1px;top:4px;font-size:13px">43220</span></div><div class="cell" style="left:344px;top:459px;width:63px;"><span style="left:2px;top:4px;font-size:13.5px;transform:scaleX(0.9364);transform-origin:0 0">Gary B. Ca</span></div><div class="cell" style="left:408px;top:459px;width:150px;"><span style="left:2px;top:4px;font-size:13.5px;transform:scaleX(0.9860);transform-origin:0 0">Rescheduled</span></div><div class="cell" style="left:559px;top:459px;width:63px"><span style="right:1px;top:4px;font-size:13px">43220.37</span></div><div class="cell" style="left:623px;top:459px;width:64px;"><span style="left:2px;top:4px;font-size:13.5px;transform:scaleX(1.0442);transform-origin:0 0">Ingrid</span></div><div class="cell" style="left:24px;top:479px;width:63px"><span style="right:1px;top:4px;font-size:13px">12.18</span></div><div class="cell" style="left:88px;top:479px;width:63px;"><span style="left:2px;top:4px;font-size:13.5px;transform:scaleX(1.0363);transform-origin:0 0">Test</span></div><div class="cell" style="left:152px;top:479px;width:63px"><span style="right:1px;top:4px;font-size:13px">1</span></div><div class="cell" style="left:216px;top:479px;width:63px;"><span style="left:2px;top:4px;font-size:13.5px;transform:scaleX(0.9868);transform-origin:0 0">Carr, Gary</span></div><div class="cell" style="left:280px;top:479px;width:63px"><span style="right:1px;top:4px;font-size:13px">44020</span></div><div class="cell" style="left:344px;top:479px;width:63px;"><span style="left:2px;top:4px;font-size:13.5px;transform:scaleX(0.9364);transform-origin:0 0">Gary B. Ca</span></div><div class="cell" style="left:408px;top:479px;width:150px;"><span style="left:2px;top:4px;font-size:13.5px;transform:scaleX(0.9842);transform-origin:0 0">Cancelled</span></div><div class="cell" style="left:559px;top:479px;width:63px"><span style="right:1px;top:4px;font-size:13px">44020.42</span></div><div class="cell" style="left:623px;top:479px;width:64px;"><span style="left:2px;top:4px;font-size:13.5px;transform:scaleX(1.0432);transform-origin:0 0">admin</span></div><div class="cell" style="left:24px;top:499px;width:63px;"><span style="left:2px;top:4px;font-size:13.5px;transform:scaleX(0.9771);transform-origin:0 0">Smoke</span></div><div class="cell" style="left:88px;top:499px;width:63px;"><span style="left:2px;top:4px;font-size:13.5px;transform:scaleX(1.0184);transform-origin:0 0">12.199b Te</span></div><div class="cell" style="left:152px;top:499px;width:63px"><span style="right:1px;top:4px;font-size:13px">2</span></div><div class="cell" style="left:216px;top:499px;width:63px;"><span style="left:2px;top:4px;font-size:13.5px;transform:scaleX(0.9868);transform-origin:0 0">Carr, Gary</span></div><div class="cell" style="left:280px;top:499px;width:63px"><span style="right:1px;top:4px;font-size:13px">43518</span></div><div class="cell" style="left:344px;top:499px;width:63px;"><span style="left:2px;top:4px;font-size:13.5px;transform:scaleX(0.9364);transform-origin:0 0">Gary B. Ca</span></div><div class="cell" style="left:408px;top:499px;width:150px;"><span style="left:2px;top:4px;font-size:13.5px;transform:scaleX(0.9842);transform-origin:0 0">Cancelled</span></div><div class="cell" style="left:559px;top:499px;width:63px"><span style="right:1px;top:4px;font-size:13px">43518.58</span></div><div class="cell" style="left:623px;top:499px;width:64px;"><span style="left:2px;top:4px;font-size:13.5px;transform:scaleX(1.0362);transform-origin:0 0">endo</span></div><div class="cell" style="left:24px;top:519px;width:63px;"><span style="left:2px;top:4px;font-size:13.5px;transform:scaleX(0.9771);transform-origin:0 0">Smoke</span></div><div class="cell" style="left:88px;top:519px;width:63px;"><span style="left:2px;top:4px;font-size:13.5px;transform:scaleX(1.0184);transform-origin:0 0">12.199b Te</span></div><div class="cell" style="left:152px;top:519px;width:63px"><span style="right:1px;top:4px;font-size:13px">2</span></div><div class="cell" style="left:216px;top:519px;width:63px;"><span style="left:2px;top:4px;font-size:13.5px;transform:scaleX(0.9868);transform-origin:0 0">Carr, Gary</span></div><div class="cell" style="left:280px;top:519px;width:63px"><span style="right:1px;top:4px;font-size:13px">43518</span></div><div class="cell" style="left:344px;top:519px;width:63px;"><span style="left:2px;top:4px;font-size:13.5px;transform:scaleX(0.9364);transform-origin:0 0">Gary B. Ca</span></div><div class="cell" style="left:408px;top:519px;width:150px;"><span style="left:2px;top:4px;font-size:13.5px;transform:scaleX(0.9860);transform-origin:0 0">Rescheduled</span></div><div class="cell" style="left:559px;top:519px;width:63px"><span style="right:1px;top:4px;font-size:13px">43518.58</span></div><div class="cell" style="left:623px;top:519px;width:64px;"><span style="left:2px;top:4px;font-size:13.5px;transform:scaleX(1.0362);transform-origin:0 0">endo</span></div><div class="a" style="left:22px;top:157px;width:67px;height:23px;border:2px solid #217346"></div><div class="a" style="left:84px;top:175px;width:7px;height:7px;background:#217346;border:1px solid #fff"></div><div id="tabs" class="a"><svg class="a" style="left:24px;top:9px" width="40" height="8"><path d="M5 0V7L1 3.5Z" fill="#c0c0c0"/><path d="M30 0V7L34 3.5Z" fill="#c0c0c0"/></svg><div class="a" style="left:98px;top:-1px;width:132px;height:25px;background:#fff;border:1px solid #ababab;border-top:none;border-bottom:2px solid #217346"></div><div class="t" style="left:109.5px;top:5.3px;font-size:13.3px;font-weight:bold;color:#217346">Appointment List</div><svg class="a" style="left:262px;top:4px" width="18" height="18"><circle cx="9" cy="9" r="7.5" fill="none" stroke="#c8c8c8" stroke-width="1"/><path d="M9 5V13M5 9H13" stroke="#c0c0c0" stroke-width="1.6"/></svg></div><div id="status" class="a"><div class="t" style="left:6px;top:5px;font-size:12px;color:#222">Ready</div></div>
</body></html>
